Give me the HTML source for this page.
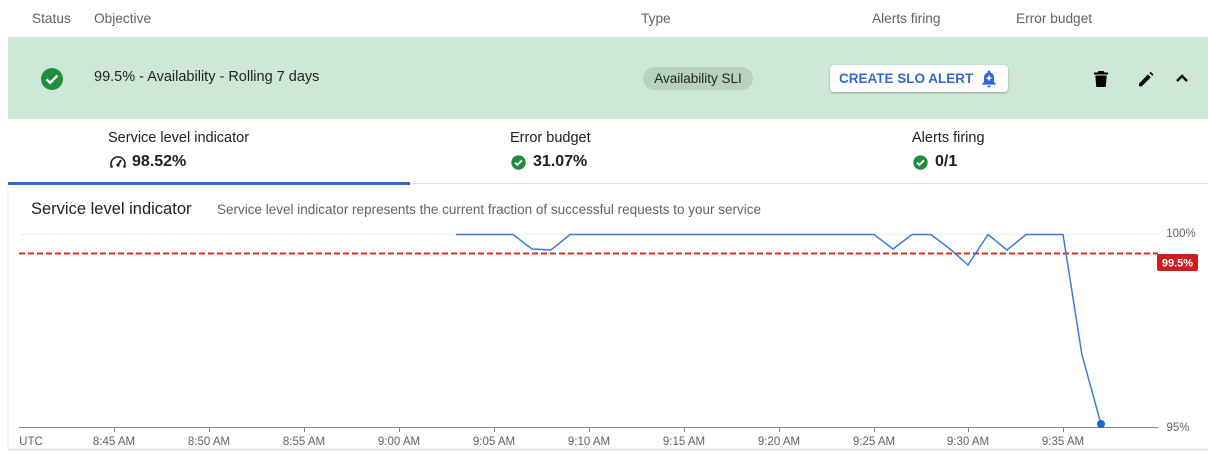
<!DOCTYPE html>
<html><head><meta charset="utf-8"><style>
*{margin:0;padding:0;box-sizing:border-box}
body{width:1208px;height:454px;background:#fff;font-family:"Liberation Sans",Roboto,sans-serif;color:#202124;position:relative;overflow:hidden}
.a{position:absolute;white-space:nowrap}
.h{font-size:13.7px;color:#5f6368;top:11px}
.row{position:absolute;left:8px;top:37px;width:1200px;height:82px;background:#cee8d7}
.chip{position:absolute;left:643px;top:67px;width:110px;height:23px;border-radius:12px;background:#b7d3c0;font-size:13.5px;line-height:23px;text-align:center;color:#202124}
.btn{position:absolute;left:830px;top:65px;width:178px;height:27px;background:#fff;border-radius:4px;box-shadow:0 1px 2px rgba(0,0,0,.3);color:#3367d6;font-weight:bold;font-size:13.5px;line-height:27px;padding-left:9px}
</style></head><body>
<div class="a h" style="left:32px">Status</div>
<div class="a h" style="left:94px">Objective</div>
<div class="a h" style="left:641px">Type</div>
<div class="a h" style="left:872px">Alerts firing</div>
<div class="a h" style="left:1016px">Error budget</div>
<div class="row"></div>
<svg class="a" style="left:40px;top:67px" width="24" height="24" viewBox="0 0 24 24"><circle cx="12" cy="12" r="11" fill="#1e8e3e"/><path d="M6.5 12.3l3.6 3.6 7.4-7.4" stroke="#fff" stroke-width="2.4" fill="none"/></svg>
<div class="a" style="left:94px;top:69px;font-size:14.5px">99.5% - Availability - Rolling 7 days</div>
<div class="chip">Availability SLI</div>
<div class="btn">CREATE SLO ALERT
<svg style="position:absolute;left:150px;top:4px" width="18" height="19" viewBox="0 0 18 19"><path d="M9 1.5a1.3 1.3 0 0 1 1.3 1.3v.7A5 5 0 0 1 14 8.5v4.5l1.8 1.8v.8H2.2v-.8L4 13V8.5a5 5 0 0 1 3.7-5v-.7A1.3 1.3 0 0 1 9 1.5zM7.2 16.6h3.6A1.8 1.8 0 0 1 7.2 16.6z" fill="#3367d6"/><path d="M9 6.5v5M6.5 9h5" stroke="#fff" stroke-width="1.6"/></svg></div>
<svg class="a" style="left:1093px;top:70px" width="16" height="18" viewBox="0 0 16 18"><path d="M5.5 1h5l1 1.5H15v2H1v-2h3.5z M2.3 5.5h11.4l-1 11.5H3.3z" fill="#000"/></svg>
<svg class="a" style="left:1137px;top:69px" width="19" height="19" viewBox="0 0 19 19"><path d="M2 14.5v2.8h2.8l9-9-2.8-2.8zM15.3 6.8l1.2-1.2-2.8-2.8-1.2 1.2z" fill="#000"/></svg>
<svg class="a" style="left:1175px;top:73px" width="14" height="10" viewBox="0 0 14 10"><path d="M2 8l5-5 5 5" stroke="#000" stroke-width="2.4" fill="none"/></svg>

<div class="a" style="left:108px;top:130px;font-size:14.5px">Service level indicator</div>
<svg class="a" style="left:109px;top:153px" width="18" height="16" viewBox="0 0 18 16"><path d="M2.5 13.5A7 7 0 1 1 15.5 13.5" stroke="#202124" stroke-width="1.6" fill="none"/><path d="M9 12l3-5" stroke="#202124" stroke-width="1.8"/><circle cx="9" cy="12" r="1.6" fill="#202124"/><circle cx="2.5" cy="13.5" r="1.3" fill="#202124"/><circle cx="15.5" cy="13.5" r="1.3" fill="#202124"/></svg>
<div class="a" style="left:132px;top:153px;font-size:16px;font-weight:bold">98.52%</div>
<div class="a" style="left:510px;top:130px;font-size:14.5px">Error budget</div>
<svg class="a" style="left:511px;top:155px" width="15" height="15" viewBox="0 0 24 24"><circle cx="12" cy="12" r="11.5" fill="#1e8e3e"/><path d="M6.5 12.3l3.6 3.6 7.4-7.4" stroke="#fff" stroke-width="3" fill="none"/></svg>
<div class="a" style="left:533px;top:153px;font-size:16px;font-weight:bold">31.07%</div>
<div class="a" style="left:912px;top:130px;font-size:14.5px">Alerts firing</div>
<svg class="a" style="left:913px;top:155px" width="15" height="15" viewBox="0 0 24 24"><circle cx="12" cy="12" r="11.5" fill="#1e8e3e"/><path d="M6.5 12.3l3.6 3.6 7.4-7.4" stroke="#fff" stroke-width="3" fill="none"/></svg>
<div class="a" style="left:935px;top:153px;font-size:16px;font-weight:bold">0/1</div>
<div class="a" style="left:8px;top:183px;width:1200px;height:1px;background:#e0e0e0"></div>
<div class="a" style="left:8px;top:182px;width:402px;height:3px;background:#3367d6"></div>

<div class="a" style="left:31px;top:200px;font-size:16.5px">Service level indicator</div>
<div class="a" style="left:217px;top:202px;font-size:13.5px;color:#5f6368">Service level indicator represents the current fraction of successful requests to your service</div>

<svg class="a" style="left:0;top:0" width="1208" height="454">
<line x1="8" y1="185" x2="8" y2="449" stroke="#eee"/>
<line x1="8" y1="449.5" x2="1208" y2="449.5" stroke="#e6e6e6" stroke-width="2"/>
<line x1="20" y1="234.5" x2="1158" y2="234.5" stroke="#eee"/>
<line x1="19" y1="427.5" x2="1158" y2="427.5" stroke="#80868b"/>
<g stroke="#80868b">
<line x1="114.5" y1="427" x2="114.5" y2="432"/><line x1="209.5" y1="427" x2="209.5" y2="432"/><line x1="304.5" y1="427" x2="304.5" y2="432"/><line x1="399.5" y1="427" x2="399.5" y2="432"/><line x1="494.5" y1="427" x2="494.5" y2="432"/><line x1="589.5" y1="427" x2="589.5" y2="432"/><line x1="684.5" y1="427" x2="684.5" y2="432"/><line x1="779.5" y1="427" x2="779.5" y2="432"/><line x1="874.5" y1="427" x2="874.5" y2="432"/><line x1="968.5" y1="427" x2="968.5" y2="432"/><line x1="1063.5" y1="427" x2="1063.5" y2="432"/>
</g>
<g font-family="Liberation Sans,sans-serif" font-size="11.5" fill="#5f6368" text-anchor="middle">
<text x="31" y="445">UTC</text><text x="114" y="445">8:45 AM</text><text x="209" y="445">8:50 AM</text><text x="304" y="445">8:55 AM</text><text x="399" y="445">9:00 AM</text><text x="494" y="445">9:05 AM</text><text x="589" y="445">9:10 AM</text><text x="684" y="445">9:15 AM</text><text x="779" y="445">9:20 AM</text><text x="874" y="445">9:25 AM</text><text x="968" y="445">9:30 AM</text><text x="1063" y="445">9:35 AM</text>
<text x="1181" y="237">100%</text><text x="1178" y="431">95%</text>
</g>
<line x1="19" y1="253.5" x2="1158" y2="253.5" stroke="#d93025" stroke-width="2" stroke-dasharray="6 3"/>
<rect x="1157" y="254" width="41" height="17" rx="2" fill="#d01c1c"/>
<text x="1177.5" y="266.5" font-family="Liberation Sans,sans-serif" font-size="11" font-weight="bold" fill="#fff" text-anchor="middle">99.5%</text>
<polyline fill="none" stroke="#3b7ddd" stroke-width="1.5" points="456,234.5 513,234.5 532,249 551,250 570,234.5 874,234.5 893,249 912,234.5 931,234.5 950,249 968,265 988,234.5 1007,250 1026,234.5 1063,234.5 1082,355 1101,424"/>
<circle cx="1101" cy="424" r="4" fill="#1a66d2"/>
</svg>
</body></html>
